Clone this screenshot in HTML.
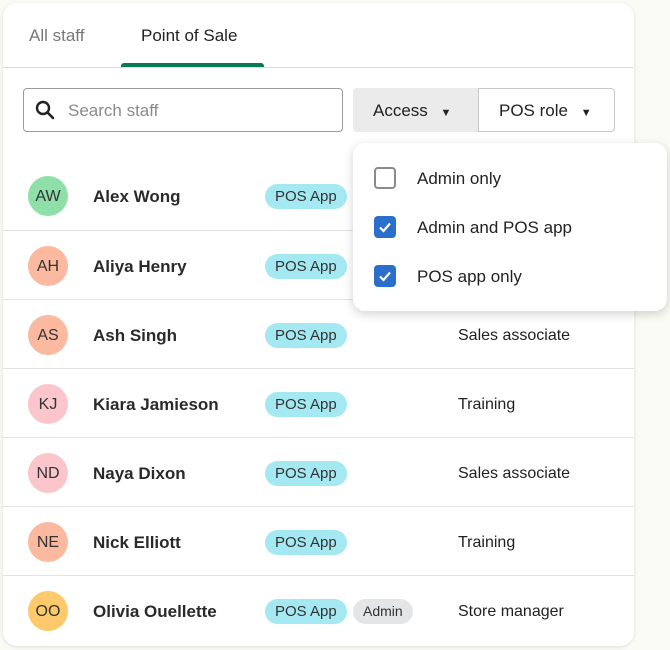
<!DOCTYPE html>
<html><head><meta charset="utf-8"><style>
*{box-sizing:border-box;margin:0;padding:0}
body{width:670px;height:650px;background:#fbfbf6;font-family:"Liberation Sans",sans-serif;position:relative;overflow:hidden;color:#202223}
.card{position:absolute;left:3px;top:3px;width:631px;height:643px;background:#fff;border-radius:14px;box-shadow:0 1px 4px rgba(0,0,0,.12);overflow:hidden}
.tab{position:absolute;top:23px;font-size:17px}
.hdr{position:absolute;left:0;right:0;top:64px;border-top:1px solid #dcdcdc}
.ul{position:absolute;left:118px;top:60px;width:143px;height:4px;background:#0b7a52;border-radius:3px 3px 0 0}
.search{position:absolute;left:20px;top:85px;width:320px;height:44px;border:1.5px solid #9a9a9a;border-radius:4px}
.search span{position:absolute;left:44px;top:12px;font-size:17px;color:#8a8a8a}
.btn{position:absolute;top:85px;height:44px;font-size:17px;padding-top:13px}
.row{position:absolute;left:0;right:0;height:69px;border-top:1px solid #e3e3e3}
.av{position:absolute;left:25px;top:15px;width:40px;height:40px;border-radius:50%;font-size:16px;text-align:center;line-height:42px;color:#333}
.nm{position:absolute;left:90px;top:26px;font-size:17px;font-weight:bold;color:#2a2a2a}
.bd{position:absolute;left:262px;top:23px;height:25px;padding:0 10px;border-radius:13px;background:#a4e8f2;font-size:15px;line-height:25px;color:#333}
.bd2{left:350px;background:#e4e5e7;font-size:14px}
.rl{position:absolute;left:455px;top:27px;font-size:16px}
.dd{position:absolute;left:353px;top:143px;width:314px;height:168px;background:#fff;border-radius:12px;box-shadow:0 3px 10px rgba(0,0,0,.18)}
.opt{position:absolute;left:64px;font-size:17px}
.cb{position:absolute;left:21px;width:22px;height:22px;border-radius:4px}
.off{border:2px solid #8a8a8a}
.on{background:#2c6ecb}
</style></head><body>
<div class="card">
<div class="tab" style="left:26px;color:#777">All staff</div>
<div class="tab" style="left:138px">Point of Sale</div>
<div class="ul"></div><div class="hdr"></div>
<div class="search"><svg style="position:absolute;left:11px;top:11px" width="20" height="20" viewBox="0 0 20 20"><circle cx="8" cy="8" r="6" fill="none" stroke="#222" stroke-width="2.4"/><path d="M12.5 12.5 L18 18" stroke="#222" stroke-width="2.6" stroke-linecap="round"/></svg><span>Search staff</span></div>
<div class="btn" style="left:350px;width:125px;background:#ebebeb;border-radius:4px 0 0 4px;padding-left:20px">Access <span style="font-size:11px;margin-left:8px">▼</span></div>
<div class="btn" style="left:475px;width:137px;border:1.5px solid #c9c9c9;border-radius:0 4px 4px 0;padding-left:20px;padding-top:12px">POS role <span style="font-size:11px;margin-left:8px">▼</span></div>

<div class="row" style="top:158px;border-top:none"><div class="av" style="background:#8fe0a8">AW</div><div class="nm">Alex Wong</div><div class="bd">POS App</div></div>
<div class="row" style="top:227px"><div class="av" style="background:#fbb9a0">AH</div><div class="nm">Aliya Henry</div><div class="bd">POS App</div></div>
<div class="row" style="top:296px"><div class="av" style="background:#fbb9a0">AS</div><div class="nm">Ash Singh</div><div class="bd">POS App</div><div class="rl">Sales associate</div></div>
<div class="row" style="top:365px"><div class="av" style="background:#fbc5cc">KJ</div><div class="nm">Kiara Jamieson</div><div class="bd">POS App</div><div class="rl">Training</div></div>
<div class="row" style="top:434px"><div class="av" style="background:#fbc5cc">ND</div><div class="nm">Naya Dixon</div><div class="bd">POS App</div><div class="rl">Sales associate</div></div>
<div class="row" style="top:503px"><div class="av" style="background:#fbb9a0">NE</div><div class="nm">Nick Elliott</div><div class="bd">POS App</div><div class="rl">Training</div></div>
<div class="row" style="top:572px"><div class="av" style="background:#fcc96b">OO</div><div class="nm">Olivia Ouellette</div><div class="bd">POS App</div><div class="bd bd2">Admin</div><div class="rl">Store manager</div></div>
</div>
<div class="dd">
<div class="cb off" style="top:24px"></div><div class="opt" style="top:26px">Admin only</div>
<div class="cb on" style="top:73px"><svg width="22" height="22" viewBox="0 0 22 22"><path d="M6 11.5 L9.5 15 L16 7.5" fill="none" stroke="#fff" stroke-width="2.2"/></svg></div><div class="opt" style="top:75px">Admin and POS app</div>
<div class="cb on" style="top:122px"><svg width="22" height="22" viewBox="0 0 22 22"><path d="M6 11.5 L9.5 15 L16 7.5" fill="none" stroke="#fff" stroke-width="2.2"/></svg></div><div class="opt" style="top:124px">POS app only</div>
</div>
</body></html>
